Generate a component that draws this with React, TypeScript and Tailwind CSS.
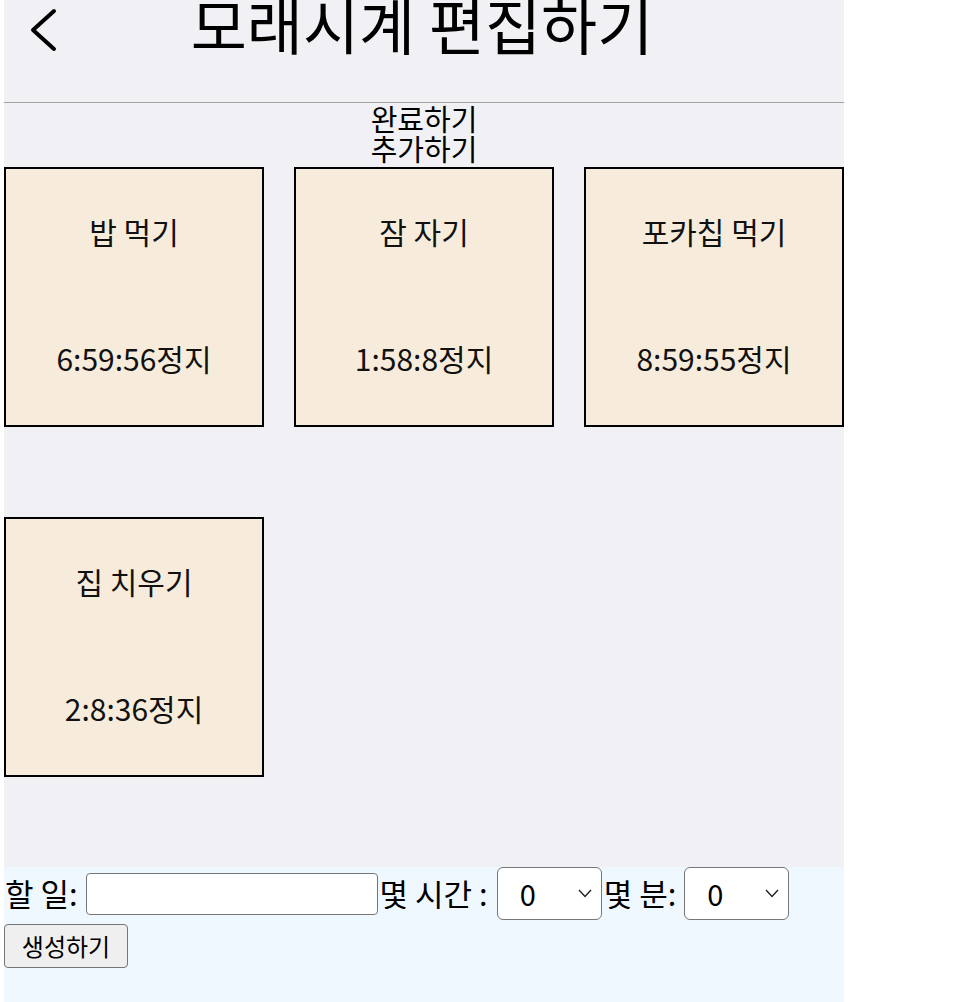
import { useState } from "react";

type Timer = { title: string; time: string };

const timers: Timer[] = [
  { title: "밥 먹기", time: "6:59:56" },
  { title: "잠 자기", time: "1:58:8" },
  { title: "포카칩 먹기", time: "8:59:55" },
  { title: "집 치우기", time: "2:8:36" },
];

function TimerCard({ item }: { item: Timer }) {
  return (
    <div className="flex h-[260px] w-[260px] flex-col items-center border-2 border-black bg-[#f7ecdc] text-[30px] text-[#111]">
      <div className="mt-[42px] leading-[40px]">{item.title}</div>
      <div className="mt-[87px] leading-[40px]">
        {item.time}
        <button type="button">정지</button>
      </div>
    </div>
  );
}

function TimeSelect({
  value,
  onChange,
  max,
}: {
  value: string;
  onChange: (v: string) => void;
  max: number;
}) {
  return (
    <div className="relative h-[53px] w-[105px]">
      <select
        value={value}
        onChange={(e) => onChange(e.target.value)}
        className="h-full w-full appearance-none rounded-[6px] border border-[#767676] bg-white pl-[22px] text-[29px]"
      >
        {Array.from({ length: max }, (_, i) => (
          <option key={i} value={i}>
            {i}
          </option>
        ))}
      </select>
      <svg
        className="pointer-events-none absolute right-[10px] top-[22px]"
        width="14"
        height="9"
        viewBox="0 0 14 9"
        fill="none"
        stroke="#222"
        strokeWidth="1.4"
      >
        <polyline points="1,1 7,7.5 13,1" />
      </svg>
    </div>
  );
}

export default function App() {
  const [todo, setTodo] = useState("");
  const [hour, setHour] = useState("0");
  const [min, setMin] = useState("0");

  return (
    <div className="min-h-screen bg-white font-['Noto_Sans_CJK_KR','Noto_Sans',sans-serif] text-black">
      <div className="ml-1 w-[840px] bg-[#f0f0f5]">
        <header className="relative flex h-[103px] justify-center border-b border-[#a3a3a3]">
          <svg
            className="absolute left-[24px] top-[6px]"
            width="30"
            height="48"
            viewBox="0 0 30 48"
            fill="none"
            stroke="black"
            strokeWidth="4"
            strokeLinecap="round"
            strokeLinejoin="round"
          >
            <polyline points="26,5 5,24 26,43" />
          </svg>
          <h1 className="-mt-[7px] ml-[-4px] text-[61px] leading-none font-normal">모래시계 편집하기</h1>
        </header>

        <div className="flex flex-col items-center pb-[4px]">
          <button type="button" className="text-[29px] leading-[30px]">
            완료하기
          </button>
          <button type="button" className="text-[29px] leading-[30px]">
            추가하기
          </button>
        </div>

        <div className="grid grid-cols-3 gap-x-[30px] gap-y-[90px] pb-[90px]">
          {timers.map((t) => (
            <TimerCard key={t.title} item={t} />
          ))}
        </div>
      </div>

      <form className="ml-1 h-[140px] w-[840px] bg-[#f0f8ff] text-[31px]" onSubmit={(e) => e.preventDefault()}>
        <div className="flex h-[53px] items-center">
          <label className="ml-[1px]">할 일:</label>
          <input
            value={todo}
            onChange={(e) => setTodo(e.target.value)}
            className="ml-[8px] h-[42px] w-[292px] rounded-[4px] border border-[#767676] bg-white px-2 text-[24px]"
          />
          <span className="ml-[2px]">몇 시간 :</span>
          <div className="ml-[9px]">
            <TimeSelect value={hour} onChange={setHour} max={24} />
          </div>
          <span className="ml-[2px]">몇 분:</span>
          <div className="ml-[8px]">
            <TimeSelect value={min} onChange={setMin} max={60} />
          </div>
        </div>
        <button
          type="submit"
          className="h-[44px] w-[124px] rounded-[4px] border border-[#767676] bg-[#efefef] text-[24px] leading-none"
        >
          생성하기
        </button>
      </form>
    </div>
  );
}
